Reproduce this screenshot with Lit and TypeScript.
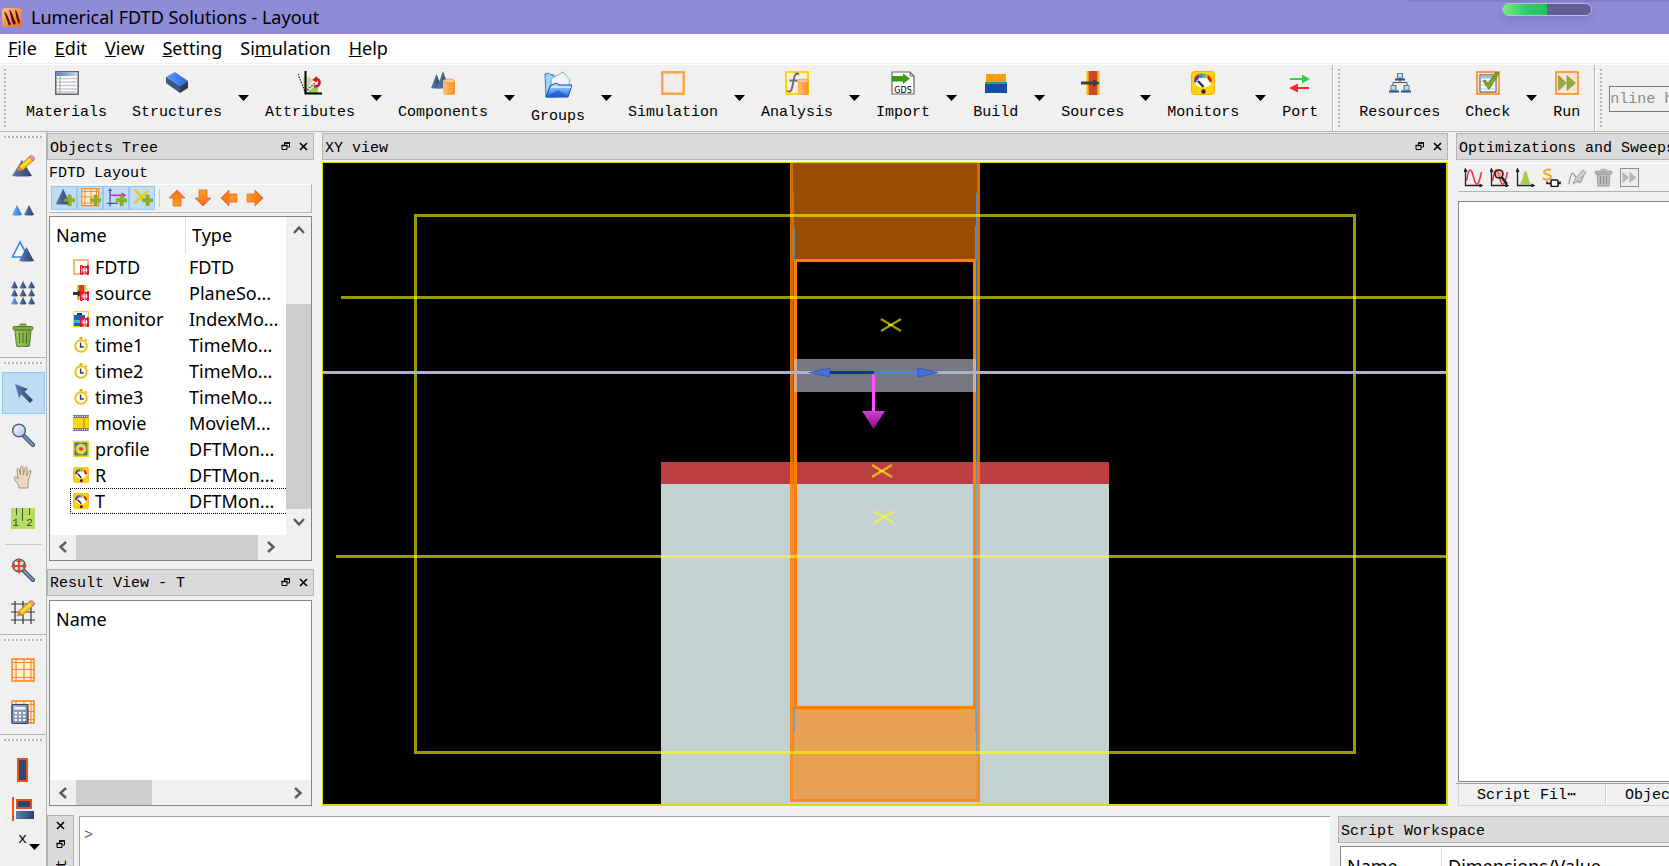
import { LitElement, html, svg, css, TemplateResult } from "lit";
import { customElement, state } from "lit/decorators.js";
import { classMap } from "lit/directives/class-map.js";

type Art = ReturnType<typeof svg>;

const cylinder = (x: number, y: number, w: number, h: number) => svg`
  <rect x=${x} y=${y} width=${w} height=${h} rx="2" fill="url(#cyl)"/>
  <ellipse cx=${x + w / 2} cy=${y + 1} rx=${w / 2} ry="2" fill="#ffc98a" stroke="#f08a24" stroke-width=".7"/>`;

const mesh = svg`
  <rect x="1" y="1" width="22" height="22" fill="#fdeee0" stroke="#ff8a1e" stroke-width="1.6"/>
  <path d="M5 1V23M13 1V23M20 1V23M1 4.500H23M1 11.500H23M1 19.500H23" stroke="#ff8a1e" stroke-width="1.200" fill="none"/>`;

const pencil = svg`
  <path d="M6 16L8 11 19 1 23 5 12 15Z" fill="#fdc100" stroke="#a86a00" stroke-width=".6"/>
  <path d="M18 2L20.500 0 24 3 22 6Z" fill="#ef8fa5" stroke="#b0506a" stroke-width=".5"/>
  <path d="M6 16L8 11 12 15Z" fill="#c98b4a"/><path d="M10 12.500L20 3.500" stroke="#ffe680" stroke-width="1.200"/>`;

const lens = svg`
  <path d="M13 13L22 22" stroke="#33466b" stroke-width="4" stroke-linecap="round"/>
  <path d="M13 13L22 22" stroke="#8797b8" stroke-width="2" stroke-linecap="round"/>
  <circle cx="8" cy="7.500" r="6.300" fill="url(#glass)" stroke="#4c6187" stroke-width="1.500"/>`;

const plus = svg`<path d="M17 9h4v5h5v4h-5v5h-4v-5h-5v-4h5z" fill="#8fae2c" stroke="#75921c" stroke-width=".6"/>`;

const gauge = svg`
  <rect x=".5" y=".5" width="23" height="23" rx="3" fill="#ffd200" stroke="#f3b300"/>
  <path d="M3 12C3 1 21 1 21 12L17 13H7Z" fill="#fff"/>
  <path d="M3 11C3 6 5 4 8 3L9 7 5 12Z" fill="#6b3fa0"/>
  <path d="M8 3L11 2.500V7H9Z" fill="#3c7de0"/><path d="M11 2.500H14L14 7H11Z" fill="#3ec46d"/>
  <path d="M14 2.500L17 4 16 7.500 14 7Z" fill="#ff9a1f"/><path d="M17 4C20 6 21 8 21 11L18 12 16 7.500Z" fill="#e02020"/>
  <path d="M4 13C8 18 16 18 20 13L16 7H8Z" fill="#fff"/>
  <path d="M7 10L12.500 16" stroke="#1f2c4a" stroke-width="2.200"/><circle cx="12.500" cy="20.500" r="2.200" fill="#2e1a4f"/>`;

const badge = svg`
  <path d="M9.500 6.500H7.500V15.500H9.500M14 6.500H15.500V15.500H14" fill="none" stroke="#e01530"/>
  <rect x="8.500" y="7" width="6.500" height="8" fill="#e01530"/>
  <path d="M10.200 9V13.500M11.800 8V15M13.500 9V13.500M9.200 11.200H14.500" stroke="#fff" stroke-width=".9"/>`;

const clock = svg`
  <rect x="6.500" y="0" width="3" height="2.500" fill="#e7b400"/><path d="M12 2L14 4" stroke="#e7b400" stroke-width="1.500"/>
  <circle cx="8" cy="9" r="5.800" fill="#fffdf2" stroke="#f4bf1c" stroke-width="2"/>
  <path d="M7.600 5.500V10H10.800" stroke="#2c3e60" stroke-width="1.400" fill="none"/>`;

const plot = svg`<path d="M1.500 2V17.500H18M0 4L1.500 1 3 4M15.500 16L18 17.500 15.500 19" fill="none" stroke="#222" stroke-width="1.300"/>`;

const bigArrow = (turn: number) => svg`
  <path d="M9 1L17 9H13V17H5V9H1Z" transform="rotate(${turn} 9 9)" fill="url(#flame)" stroke="#f0602c" stroke-width=".8"/>`;

const play = (fill: string, edge: string) => svg`
  <path d="M3.500 4.500L11.500 12 3.500 19.500ZM12 4.500L20.500 12 12 19.500Z" fill=${fill} stroke=${edge} stroke-width=".6"/>`;

const tri = (x: number, y: number, w: number, h: number, fill = "url(#navy)") => svg`
  <path d="M${x + w / 2} ${y}L${x + w} ${y + h}Q${x + w / 2} ${y + h + 1} ${x} ${y + h}Z" fill=${fill}/>`;

const ART: Record<string, Art> = {
  materials: svg`<rect x=".8" y=".8" width="22.400" height="22.400" fill="#fff" stroke="#5a5560" stroke-width="1.400"/>
    <rect x="1.500" y="1.500" width="21" height="3.500" fill="url(#head)"/>
    <path d="M2 7.500H22M2 11H22M2 14.500H22M2 18H22M2 21H22" stroke="#c9c9d2" stroke-width="1.500"/><path d="M5 2V22" stroke="#8a8a94" stroke-width=".8"/>`,
  structures: svg`<path d="M1 6L10 1 23 10 15 15Z" fill="url(#blue)"/><path d="M1 6L15 15V22L1 12Z" fill="#3a5687"/><path d="M15 15L23 10V17L15 22Z" fill="#2b3c5e"/>`,
  attributes: svg`<path d="M5 8Q8 2 14 9L8 22H6Z" fill="#c6d9a0"/><path d="M7 22L20 14V22Z" fill="#8fd14f"/>
    <path d="M0 3L7 21L17 12" stroke="#111" stroke-width="1.200" stroke-dasharray="1.400 1.400" fill="none"/>
    <path d="M7.500 0V22.500H24" stroke="#000" stroke-width="2" fill="none"/>
    <path d="M16 15C21 17 24 10 19 8" stroke="#d01818" stroke-width="2.600" fill="none"/><path d="M14 9L19 5V11.500Z" fill="#d01818"/>`,
  components: svg`${tri(0, 3, 11, 14)}${tri(6, 0, 12, 17)}${cylinder(12, 9, 12, 15)}`,
  groups: svg`<path d="M1 3L10 4 11 26H2Z" fill="#9fd4f8" stroke="#2d7fd8"/><path d="M1 3L4 2 9 5" fill="#cfeafe" stroke="#2d7fd8"/>
    <path d="M7 8L19 1 26 9 24 18H8Z" fill="#f2f4fb" stroke="#9aa4c4"/><path d="M6 15L12 12 15 14H28L24 26H2Z" fill="url(#folder)" stroke="#1746ad"/>
    <path d="M3 25L14 19 24 25Z" fill="#1c53cf" opacity=".7"/><path d="M7 16H27" stroke="#dff2ff" stroke-width="1.400"/>`,
  simulation: svg`<rect x="1" y="1" width="22" height="22" fill="#f1eeea" stroke="#ff8a1e" stroke-width="1.500"/><rect x="2.500" y="2.500" width="19" height="19" fill="none" stroke="#ffc893" stroke-width="1"/>`,
  analysis: svg`<rect x="1" y="1" width="22" height="22" fill="#f4f1e4" stroke="#ffd400" stroke-width="2"/>
    <path d="M14 3.500C11 1 9.500 4 9 8L7 17C6.500 20 4.500 21.500 2 20M4.500 9.500H12.500" fill="none" stroke="#6c6c6c" stroke-width="1.900"/>${cylinder(12.500, 9, 11, 15)}`,
  import: svg`<path d="M1 1H19L23 5V23H1Z" fill="#fff" stroke="#666" stroke-width="1.200"/><path d="M19 1V5H23" fill="none" stroke="#666"/>
    <path d="M1 5H12V2.500L19 7.500 12 13V10.500H1Z" fill="#3f9912"/><text x="12" y="21.500" text-anchor="middle" class="gds">GDS</text>`,
  build: svg`<rect x="2" y="3" width="20" height="8.500" fill="#ff9c0a"/><rect x="1" y="11" width="22" height="11" fill="#154fa5"/><rect x="1" y="11" width="22" height="2" fill="#1ba784"/>`,
  sources: svg`<rect x="5" y="0" width="14" height="24" fill="#ffd84a"/><rect x="6.500" y="0" width="11" height="24" fill="#f0922c"/><rect x="8" y="0" width="8" height="24" fill="#cf4a1c"/>
    <path d="M0 10.500H12V8L19 12 12 16V13.500H0Z" fill="#3a3f4a"/>`,
  monitors: gauge,
  port: svg`<path d="M2 7H14V3.500L22 8 14 12.500V9H2Z" fill="#3ccb4a"/><path d="M21 16H10V12.500L1 17 10 21.500V18H21Z" fill="#fb2b2b"/>`,
  resources: svg`<path d="M12 6V12M5 16V11.500H19V16" stroke="#556" fill="none"/>
    <g fill="#bfe0f8" stroke="#5c7690"><rect x="9.500" y="2.500" width="5" height="4.500"/><rect x="3" y="14.500" width="5" height="4.500"/><rect x="16" y="14.500" width="5" height="4.500"/></g>
    <path d="M7 8.500H17M1 20.500H11M13 20.500H23" stroke="#2b4f8c" stroke-width="2"/>`,
  check: svg`<rect x="1" y="1" width="22" height="22" fill="#ffe6cf" stroke="#ff8a1e" stroke-width="1.600"/><rect x="4" y="4" width="16" height="17" fill="#fff" stroke="#444"/>
    <rect x="4.500" y="4.500" width="15" height="3" fill="#9fbdec"/><path d="M5 10H20M5 14H20M5 18H20" stroke="#b9bdd0"/><path d="M7 10L9 9 12 12.500 20 1 23 2 13 18.500Z" fill="#83a02e" stroke="#6f8a20"/>`,
  run: svg`<rect x="1" y="1" width="22" height="22" fill="#fbe4cd" stroke="#ff8a1e" stroke-width="1.600"/>${play("#93a943", "#7f9633")}`,
  edit: svg`${tri(1, 5, 20, 16)}${pencil}`,
  mirror: svg`${tri(1, 8, 10, 10, "url(#sky)")}${tri(13, 8, 10, 10)}`,
  outline: svg`<path d="M9 3L17 18H1.500Z" fill="#f6fbff" stroke="#3d86e0" stroke-width="1.600"/>${tri(8, 8, 15, 14)}`,
  array: svg`${[0, 8, 16].map(y => [0, 8.5, 17].map(x => tri(x, y, 7, 7, y === 16 && x === 0 ? "url(#sky)" : "url(#navy)")))}`,
  trash: svg`<path d="M4 7H20L18.500 23Q12 25 5.500 23Z" fill="url(#leaf)" stroke="#4f7f1c"/><rect x="2" y="3.500" width="20" height="3.500" rx="1.500" fill="#7fa945" stroke="#4f7f1c"/>
    <rect x="9" y="1" width="6" height="2.500" rx="1" fill="#9cc067" stroke="#4f7f1c"/><path d="M8.500 9.500V20M12 9.500V20M15.500 9.500V20" stroke="#4d7a1e" stroke-width="1.200"/>`,
  pointer: svg`<path d="M4 3L17 8 13.500 10.500 22 19 19 22 10.500 13.500 8 17Z" fill="url(#navy)"/>`,
  zoom: lens,
  hand: svg`<path d="M8 23C8 18 2.500 16 3.500 12.500 4 11 6 12 7 14L6 5C6 3 8 3 8.300 5L9.500 10 9.500 2.500C9.500 1 12 1 12 2.500L12.500 10 14 3C14.500 1.500 16.500 2 16.200 3.500L15.500 11 18 6C19 4.500 20.500 5.500 20 7L17.500 15C17 18 17 20 17 23Z" fill="#ead9c2" stroke="#a08b70" stroke-width=".9"/>`,
  ruler: svg`<rect x="0" y="1" width="24" height="21" fill="#b9dc5e"/><path d="M5.500 1V8M11.500 1V14M18.500 1V8" stroke="#3c5a3c"/>
    <text x="4.500" y="19" text-anchor="middle" class="num">1</text><text x="18.500" y="19" text-anchor="middle" class="num">2</text>`,
  extent: svg`${lens}<path d="M8 0L11 4H9V7H12V5L16 8 12 11V9H9V12H11L8 16 5 12H7V9H4V11L0 8 4 5V7H7V4H5Z" fill="#e2481c"/>`,
  grid: svg`<path d="M4 1V24M12 1V24M20 1V24M0 4H24M0 12H24M0 20H24" stroke="#3a3230" stroke-width="1.200"/>${pencil}`,
  mesh,
  calc: svg`${mesh}<rect x="1" y="4.500" width="16" height="19" rx="1.500" fill="url(#steel)" stroke="#2b4064" stroke-width="1.200"/>
    <rect x="3.500" y="7" width="11" height="2.500" fill="#f3f5fa"/><path d="M3.500 13H14.500M3.500 16.500H14.500M3.500 20H14.500" stroke="#fff" stroke-width="2" stroke-dasharray="2.400 1.900"/>`,
  bar: svg`<rect x="7" y="1" width="9" height="22" fill="#2d4878" stroke="#ea5018" stroke-width="2"/>`,
  align: svg`<rect x="1" y="0" width="2" height="24" fill="#ea5018"/><rect x="6" y="3" width="14" height="8" fill="#2d4878" stroke="#ea5018" stroke-width="2"/><rect x="5" y="14" width="18" height="8" fill="url(#navy)"/>`,
  spread: svg`<rect x="3" y="3" width="8" height="10" fill="#2d4878" stroke="#ea5018" stroke-width="2"/><rect x="14" y="0" width="8" height="14" fill="url(#navy)"/>`,
  addStructure: svg`${tri(1, 1, 19, 20)}${plus}`,
  addMesh: svg`${mesh}${plus}`,
  addSource: svg`<path d="M4 1V24M0 20H14" stroke="#3a5a90" stroke-width="1.600"/><path d="M1.500 4L4 0 6.500 4Z" fill="#3a5a90"/><path d="M4 9.500H21" stroke="#c430d8" stroke-width="2.200"/><path d="M19 5.500L25 9.500 19 13.500Z" fill="#c430d8"/>${plus}`,
  addMonitor: svg`<path d="M2 2L20 21M20 3L2 20" stroke="#e8cf00" stroke-width="3"/>${plus}`,
  up: bigArrow(0), down: bigArrow(180), left: bigArrow(270), right: bigArrow(90),
  tFdtd: svg`<rect x="1" y="1" width="14" height="14" fill="#fff" stroke="#ff9d4a" stroke-width="1.500"/>${badge}`,
  tSource: svg`<rect x="4" y="0" width="9" height="15" fill="#ffb21c"/><rect x="6" y="0" width="5" height="8" fill="#d1421c"/><path d="M0 7H5V5L9 8.500 5 12V10H0Z" fill="#333"/>${badge}`,
  tIndex: svg`<rect x=".5" y=".5" width="15" height="15" fill="#fff" stroke="#ffd400"/><rect x="1" y="4" width="11" height="11" fill="#1d64b0"/><rect x="4" y="2" width="5" height="2" fill="#173a70"/><rect x="1" y="9" width="9" height="3" fill="#2ec0d0"/>${badge}`,
  tTime: clock,
  tMovie: svg`<rect x="0" y="0" width="16" height="16" fill="#6d6870"/><rect x="0" y="3" width="16" height="10" fill="#ffd800"/><path d="M11 3V13" stroke="#b08900"/><path d="M0 1.500H16M0 14.500H16" stroke="#fff" stroke-width="1.400" stroke-dasharray="1 1.200"/>`,
  tProfile: svg`<rect x=".8" y=".8" width="14.400" height="14.400" fill="#49709e" stroke="#ffd000" stroke-width="1.600"/><circle cx="8" cy="8" r="5.500" fill="#b9dc6a"/><circle cx="8" cy="8" r="3.500" fill="#ffd23c"/><circle cx="8" cy="8" r="2" fill="#f23c1c"/>`,
  sweep: svg`${plot}<path d="M2.500 13C5 -1 7 -1 9.500 9S14 20 17.500 4" fill="none" stroke="#f03030" stroke-width="1.500"/>`,
  optimize: svg`${plot}<path d="M2.500 13C5 -1 7 -1 9.500 9S14 20 17.500 4" fill="none" stroke="#f03030" stroke-width="1.500"/><circle cx="9" cy="6" r="4" fill="#ff8a80" fill-opacity=".6" stroke="#222" stroke-width="1.600"/><path d="M11.500 9L17 16" stroke="#222" stroke-width="2.600"/>`,
  yield: svg`${plot}<path d="M3 16.500C7 15 7 3 9.500 3S12 15 15.500 16.500Z" fill="#a8cc4c"/>`,
  sparam: svg`<path d="M9 2.500C6 .5 1.500 2 2 4.500 2.500 7 9 6 9 9S3 12.500 .8 10" fill="none" stroke="#ffa51c" stroke-width="1.900"/><path d="M5 13.500V15.500H18V13.500" fill="none" stroke="#111" stroke-width="1.500"/><rect x="9" y="12" width="7" height="6.500" rx="1" fill="#fff" stroke="#111" stroke-width="1.500"/>`,
  tune: svg`<path d="M1 16C3 3 5 3 8 10S13 16 16 5" fill="none" stroke="#a3a3a3" stroke-width="1.500"/><path d="M5 16L7 11 15 2 18 5 10 13Z" fill="#cfcfcf" stroke="#9c9c9c"/>`,
  bin: svg`<path d="M3 6H16L15 18H4Z" fill="#bcbcbc" stroke="#9a9a9a"/><rect x="1" y="3" width="17" height="3" rx="1" fill="#b2b2b2" stroke="#9a9a9a" stroke-width=".6"/><rect x="6.500" y=".8" width="6" height="2" fill="#b2b2b2"/><path d="M6.500 8V16M9.500 8V16M12.500 8V16" stroke="#8d8d8d"/>`,
  runGrey: svg`<rect x=".5" y=".5" width="18" height="18" fill="#ececec" stroke="#8f8f8f"/><path d="M2.500 4L9 9.500 2.500 15ZM9.500 4L16.500 9.500 9.500 15Z" fill="#b4b4b4"/>`,
};

const SIDE: Record<string, Art> = {
  restore: svg`<path d="M3.500 3V1H8.500V5H6.500M1 3.500H6V7.500H1Z" fill="none" stroke="#000" stroke-width="1"/><path d="M3 1H9M.5 3.500H6.500" stroke="#000" stroke-width="1.600"/>`,
  close: svg`<path d="M1 1L8 8M8 1L1 8" stroke="#000" stroke-width="1.600"/>`,
};

const icon = (name: string, size = 24, box = size) =>
  html`<svg width=${size} height=${size} viewBox="0 0 ${box} ${box}" aria-hidden="true">${ART[name]}</svg>`;

const caret = html`<svg width="11" height="6" viewBox="0 0 11 6" aria-hidden="true"><path d="M0 0H11L5.500 6Z" fill="#000"/></svg>`;

const chevron = (turn: number) => html`<svg width="12" height="12" viewBox="0 0 12 12" aria-hidden="true">
  <path d="M1 9L6 3.500 11 9" transform="rotate(${turn} 6 6)" fill="none" stroke="#5c5c5c" stroke-width="2.400"/></svg>`;

interface Tool { label: string; icon: string; menu?: boolean; size?: number; }

const MAIN: Tool[] = [
  { label: "Materials", icon: "materials" },
  { label: "Structures", icon: "structures", menu: true },
  { label: "Attributes", icon: "attributes", menu: true },
  { label: "Components", icon: "components", menu: true },
  { label: "Groups", icon: "groups", menu: true, size: 28 },
  { label: "Simulation", icon: "simulation", menu: true },
  { label: "Analysis", icon: "analysis", menu: true },
  { label: "Import", icon: "import", menu: true },
  { label: "Build", icon: "build", menu: true },
  { label: "Sources", icon: "sources", menu: true },
  { label: "Monitors", icon: "monitors", menu: true },
  { label: "Port", icon: "port" },
];
const CONTROL: Tool[] = [
  { label: "Resources", icon: "resources" },
  { label: "Check", icon: "check", menu: true },
  { label: "Run", icon: "run" },
];
const ROWS: [string, string, string, number][] = [
  ["FDTD", "FDTD", "tFdtd", 16],
  ["source", "PlaneSo...", "tSource", 16],
  ["monitor", "IndexMo...", "tIndex", 16],
  ["time1", "TimeMo...", "tTime", 16],
  ["time2", "TimeMo...", "tTime", 16],
  ["time3", "TimeMo...", "tTime", 16],
  ["movie", "MovieM...", "tMovie", 16],
  ["profile", "DFTMon...", "tProfile", 16],
  ["R", "DFTMon...", "monitors", 24],
  ["T", "DFTMon...", "monitors", 24],
];
const MENUS: [string, string, string][] = [
  ["", "F", "ile"], ["", "E", "dit"], ["", "V", "iew"], ["", "S", "etting"], ["Si", "m", "ulation"], ["", "H", "elp"],
];

@customElement("app-root")
export class AppRoot extends LitElement {
  @state() private selected = "T";
  @state() private mode = "pointer";

  static styles = css`
    :host {
      display: flex; flex-direction: column; height: 100vh; overflow: hidden;
      background: #f0f0f0; color: #000; font: 18px/26px "Noto Sans", "Open Sans", sans-serif;
      --mono: "Liberation Mono", "DejaVu Sans Mono", monospace;
    }
    * { box-sizing: border-box; }
    button { font: inherit; color: inherit; background: none; border: 0; padding: 0; margin: 0; }
    svg { display: block; flex: none; }
    .defs { position: absolute; width: 0; height: 0; }
    .gds { font: 8px "DejaVu Sans", sans-serif; }
    .num { font: 11px "Liberation Mono", monospace; fill: #2c4a2c; }

    .title { flex: none; height: 34px; padding: 0 77px 0 2px; display: flex; align-items: center; gap: 8px;
      background: linear-gradient(#7f7bc2, #8f8bd7) right top / 261px 3px no-repeat #8f8bd7; }
    .title h1 { margin: 0; flex: 1; font-size: 18px; font-weight: 400; line-height: 34px; white-space: nowrap; }
    .charge { align-self: flex-start; margin-top: 3px; width: 90px; height: 13px; border: 1px solid #bdbae6; border-radius: 6px;
      background: #625f98; overflow: hidden; box-shadow: 0 4px 8px rgba(60, 56, 130, .2); }
    .charge i { display: block; height: 100%; width: 50%; background: linear-gradient(90deg, #78f080, #2ecc71 50%, #25c060); }

    .menus { flex: none; height: 30px; display: flex; gap: 2px; background: #fff; border-bottom: 1px solid #f0f0f0; }
    .menus button { padding: 0 8px; line-height: 29px; }

    .bars { flex: none; display: flex; height: 68px; border-top: 1px solid #fff; border-bottom: 1px solid #b4b4b4; overflow: hidden; }
    .bar { display: flex; flex: none; padding-right: 1px; border-right: 1px solid #b4b4b4; }
    .bar + .bar { border-left: 1px solid #fff; }
    .bar.help { flex: 1; min-width: 0; border-right: 0; padding: 0; align-items: center; }
    .grip { flex: none; width: 2px; margin: 4px 8px 4px 4px; align-self: stretch;
      background: repeating-linear-gradient(180deg, #b4b4b4 0 2px, #fafafa 2px 4px); }
    .bar + .bar .grip { margin-right: 7px; }
    .tool { display: flex; flex-direction: column; align-items: center; gap: 9px; padding: 6px 12px 0; font: 15px/18px var(--mono); }
    .solo { margin-right: 1px; }
    .drop { width: 19px; display: flex; align-items: center; justify-content: center; }
    .find { flex: 1; min-width: 0; height: 26px; margin-top: 2px; border: 1px solid #7a7a7a; border-right: 0; background: #f0f0f0;
      padding: 0; font: 15px/18px var(--mono); }
    .find::placeholder { color: #8a8a8a; opacity: 1; }

    .main { flex: 1; min-height: 0; display: flex; }
    .side { flex: none; width: 47px; border-right: 1px solid #b4b4b4; overflow: hidden; }
    .pack { display: flex; flex-direction: column; padding-bottom: 1px; border-bottom: 1px solid #b4b4b4; }
    .pack:last-child { border: 0; }
    .pack .dots { height: 2px; margin: 4px 3px 8px 4px; background: repeating-linear-gradient(90deg, #b4b4b4 0 2px, #fafafa 2px 4px); }
    .pack button { flex: none; height: 42px; margin: 0 1px 0 2px; padding-right: 1px; display: flex; align-items: center; justify-content: center; border: 1px solid transparent; }
    .pack button.on { background: #c0dcf3; border-color: #90c8f6; }
    .pack .short { height: 36px; }
    .pack .axis { height: 34px; gap: 2px; align-items: flex-start; font: 15px/24px var(--mono); }
    .pack .axis { justify-content: flex-end; padding-right: 4px; }
    .axis svg { margin-top: 16px; }
    .pack hr { width: 37px; height: 1px; margin: 4px 5px; border: 0; background: #c8c8c8; }

    .work { flex: 1; min-width: 0; padding-top: 1px; display: grid; grid-template-rows: minmax(0, 1fr) 51px; gap: 9px; }
    .upper { display: grid; grid-template-columns: 267px minmax(0, 1fr) 213px; gap: 8px; min-height: 0; }
    .stack { display: grid; grid-template-rows: minmax(0, 9fr) minmax(0, 5fr); gap: 8px; min-height: 0; }
    .dock { display: flex; flex-direction: column; min-width: 0; min-height: 0; overflow: hidden; }
    .cap { flex: none; display: flex; align-items: center; gap: 9px; height: 27px; padding: 0 5px 0 2px; background: #dadada; border: 1px solid #b4b4b4; }
    .open { padding-right: 0; border-right: 0; }
    h2 { flex: 1; min-width: 0; margin: 0; font: 15px/20px var(--mono); white-space: nowrap; }
    .cap h2 { padding-top: 4px; }
    .sub { margin: 0; padding: 4px 2px 0; font: 15px/20px var(--mono); }
    .strip { flex: none; display: flex; height: 29px; margin: 0 2px; padding: 2px 0 2px 2px; border: solid #b4b4b4; border-width: 0 1px 1px 0; box-shadow: inset 0 1px #fff; }
    .strip button { width: 26px; display: flex; align-items: center; justify-content: center; }
    .strip button.on { background: #c0dcf3; border: 1px solid #90c8f6; padding-left: 1px; }
    .strip i { width: 1px; margin: 3px 4px; background: #c8c8c8; }
    .frame { flex: 1; min-height: 0; margin: 4px 2px 0; border: 1px solid #828790; background: #fff; overflow: hidden; }
    .strip + .frame { margin-top: 3px; }
    .scroll { display: grid; grid-template-columns: minmax(0, 1fr) 25px; grid-template-rows: minmax(0, 1fr) 25px; }
    .wide { grid-template-columns: minmax(0, 1fr); }
    .pane { overflow: hidden; }
    .v, .h { display: flex; background: #f0f0f0; }
    .v { flex-direction: column; }
    .h { grid-column: 1 / -1; }
    .v button, .h button { flex: none; width: 26px; height: 25px; display: flex; align-items: center; justify-content: center; }
    .v button { width: 25px; height: 26px; }
    .thumb { background: #cdcdcd; }
    .g3 { flex: 3; } .g4 { flex: 4; } .g7 { flex: 7; } .g10 { flex: 10; }
    .end { width: 27px; }

    table { width: 100%; border-collapse: separate; border-spacing: 0; table-layout: fixed; }
    th { height: 37px; padding: 0 6px 2px; text-align: left; font-weight: 400; }
    th + th { border-left: 1px solid #e0e0e0; }
    td { height: 26px; padding: 0 0 0 4px; white-space: nowrap; overflow: hidden; line-height: 24px; }
    td:first-child { padding: 0 0 0 20px; }
    .c1 { width: 135px; }
    .cell { display: flex; align-items: center; gap: 6px; height: 26px; padding-left: 2px; border: 1px solid transparent; border-right: 0; }
    .sel .cell { border: 1px dotted #000; border-right: 0; }
    .sel td + td { border: 1px dotted #000; border-width: 1px 0; }
    .name { padding: 5px 6px; }

    .view { flex: 1; min-height: 0; margin-top: 2px; background: #000; border: solid #d9d900; border-width: 1px 2px 2px 1px; }
    .view svg { width: 100%; height: 100%; }
    .sweeps { margin: 3px 0 0 2px; border-right: 0; align-items: center; }
    .strip + .blank { margin: 9px 0 0 2px; border-right: 0; }
    .tabs { flex: none; display: flex; height: 23px; margin-top: 1px; border-top: 1px solid #a0a0a0; padding-left: 2px; }
    .tabs button { flex: none; min-width: 148px; text-align: left; padding: 3px 18px 0; border: solid #d0d0d0; border-width: 0 1px 1px; font: 15px/18px var(--mono); white-space: nowrap; }
    .tabs button + button { border-left: 1px solid #fff; }

    .lower { display: grid; grid-template-columns: minmax(0, 1fr) 331px; gap: 8px; min-height: 0; overflow: hidden; }
    .lower .dock { padding-top: 1px; }
    .console { display: flex; gap: 5px; min-height: 0; }
    .vcap { flex: none; width: 27px; display: flex; flex-direction: column; align-items: center; gap: 10px; padding-top: 5px; background: #dadada; border: 1px solid #b4b4b4; border-bottom: 0; overflow: hidden; }
    .vcap h2 { flex: none; writing-mode: vertical-rl; transform: rotate(180deg); padding-right: 4px; }
    .prompt { flex: 1; min-width: 0; display: flex; margin-top: 1px; padding: 10px 4px; background: #fff; border: solid #a0a0a0; border-width: 1px 0 0 1px; font: 15px/18px var(--mono); color: #46608f; }
    .prompt textarea { flex: 1; border: 0; outline: 0; resize: none; padding: 0 4px; font: inherit; background: none; overflow: hidden; }
    .vars { margin: 3px 0 0 2px; border-width: 1px 0 0 1px; }
    .vars .c1 { width: 100px; }
    .vars th { white-space: nowrap; padding-bottom: 0; }
  `;

  private tool(t: Tool): TemplateResult {
    return html`<button class="tool ${t.menu ? "" : "solo"}">${icon(t.icon, t.size ?? 24)}<span>${t.label}</span></button>
      ${t.menu ? html`<button class="drop" aria-label="${t.label} menu">${caret}</button>` : ""}`;
  }

  private side(name: string, cls = ""): TemplateResult {
    return html`<button class="${cls} ${this.mode === name ? "on" : ""}" aria-label=${name} @click=${() => (this.mode = name)}>${icon(name)}</button>`;
  }

  private small(name: "restore" | "close"): TemplateResult {
    return html`<button aria-label=${name}><svg width="9" height="9" viewBox="0 0 9 9">${SIDE[name]}</svg></button>`;
  }

  private cap(text: string, controls = true): TemplateResult {
    return html`<header class="cap ${controls ? "" : "open"}"><h2>${text}</h2>${controls ? html`${this.small("restore")}${this.small("close")}` : ""}</header>`;
  }

  private scene(): TemplateResult {
    const cross = (x: number, y: number) => svg`<path d="M${x - 10} ${y - 6}L${x + 10} ${y + 6}M${x + 10} ${y - 6}L${x - 10} ${y + 6}"
      stroke="#ff0" stroke-opacity=".6" stroke-width="2.500"/><rect x=${x - 3} y=${y - 1} width="5" height="2" fill="#ff0" fill-opacity=".6"/>`;
    return html`<svg viewBox="323 163 1123 641" preserveAspectRatio="xMidYMid slice" role="img" aria-label="XY view of the simulation">
      <g shape-rendering="crispEdges" fill="none">
        <rect x="661" y="484" width="448" height="330" fill="#c4d1d1"/>
        <rect x="661" y="462" width="448" height="22" fill="#be3f41"/>
        <path d="M793 150H977V260H793ZM793 708H977V800H793Z" fill="#ff8000" fill-opacity=".6"/>
        <path d="M791.500 150V800.500H978.500V150" stroke="#ff8000" stroke-opacity=".84" stroke-width="3"/>
        <path d="M793.500 193V755M976.500 193V755M794.500 226V260M975.500 226V260M794.500 708V732M975.500 708V732" stroke="#4a9cf0" stroke-opacity=".7"/>
        <rect x="795.500" y="260.500" width="179" height="447" stroke="#ff8000" stroke-width="3"/>
        <rect x="794" y="359" width="182" height="33" fill="#c7c7d7" fill-opacity=".6"/>
        <g stroke="#ff0" stroke-opacity=".6" stroke-width="3">
          <rect x="415.500" y="215.500" width="939" height="537"/>
          <path d="M341 297.500H1500M336 556.500H1500"/>
        </g>
        <path d="M300 372.500H1500" stroke="#b0b0cc" stroke-width="3"/>
        <path d="M830 372.500H874" stroke="#0033b0" stroke-width="3"/>
        <path d="M874 372.500H918" stroke="#4a80ff" stroke-width="3"/>
        <path d="M873.500 374V411" stroke="#ff50ff" stroke-width="3"/>
      </g>
      <path d="M809 372.500L830 368V377ZM938 372.500L918 368V377Z" fill="#4273dc" stroke="#1e4cb0" stroke-width=".6"/>
      <path d="M862 411H885L873.500 429Z" fill="url(#plum)"/>
      ${cross(891, 325)}${cross(882, 471)}${cross(884, 517)}
    </svg>`;
  }

  render() {
    const grad = (id: string, stops: string[], x2 = 1, y2 = 0) => svg`<linearGradient id=${id} x1="0" y1="0" x2=${x2} y2=${y2}>
      ${stops.map((c, i) => svg`<stop offset=${i / (stops.length - 1)} stop-color=${c}/>`)}</linearGradient>`;
    return html`
      <svg class="defs" aria-hidden="true"><defs>
        ${grad("navy", ["#5f80b4", "#2b4068"])}${grad("sky", ["#6fb2f8", "#2d6fd0"])}${grad("blue", ["#5a9bff", "#2c63d8"])}
        ${grad("cyl", ["#ffc078", "#ff8f1c"])}${grad("head", ["#4f7dc4", "#c5d8f2"])}${grad("folder", ["#bfe6ff", "#2a6be8"], 0, 1)}
        ${grad("leaf", ["#a3c866", "#78a63a"])}${grad("glass", ["#ffffff", "#a9bfe0"], 1, 1)}${grad("steel", ["#a8b4cc", "#6b7ca0"], 1, 1)}
        ${grad("flame", ["#f46a1c", "#ffa21c"], 0, 1)}${grad("plum", ["#d040d0", "#860c8c"], 0, 1)}${grad("logo", ["#ffc08a", "#f0641c"], 1, 1)}
      </defs></svg>

      <header class="title">
        <svg width="21" height="21" viewBox="0 0 21 21" aria-hidden="true"><rect x="0" y="1" width="20" height="19" rx="4" fill="url(#logo)"/>
          <path d="M2 5C5 4 7 14 9 17L7 19C5 14 4 9 2 5ZM7 3C10 3 11 11 14 16L12 18C9 14 9 8 7 3ZM13 3C16 4 16 10 18 14L17 17C14 12 14 7 13 3Z" fill="#4a1606"/></svg>
        <h1>Lumerical FDTD Solutions - Layout</h1>
        <div class="charge"><i></i></div>
      </header>

      <nav class="menus">${MENUS.map(([a, u, b]) => html`<button>${a}<u>${u}</u>${b}</button>`)}</nav>

      <div class="bars">
        <div class="bar"><span class="grip"></span>${MAIN.map(t => this.tool(t))}</div>
        <div class="bar"><span class="grip"></span>${CONTROL.map(t => this.tool(t))}</div>
        <div class="bar help"><span class="grip"></span><input class="find" type="text" aria-label="Online help" placeholder="nline help"></div>
      </div>

      <div class="main">
        <div class="side">
          <div class="pack"><div class="dots"></div>${["edit", "mirror", "outline", "array", "trash"].map(n => this.side(n))}</div>
          <div class="pack"><div class="dots"></div>${["pointer", "zoom", "hand", "ruler"].map(n => this.side(n))}<hr>${["extent", "grid"].map(n => this.side(n))}</div>
          <div class="pack"><div class="dots"></div>${["mesh", "calc"].map(n => this.side(n))}</div>
          <div class="pack"><div class="dots"></div>${this.side("bar")}${this.side("align", "short")}
            <button class="axis"><span>x</span>${caret}</button>${this.side("spread", "short")}</div>
        </div>

        <div class="work">
          <div class="upper">
            <div class="stack">
              <section class="dock">
                ${this.cap("Objects Tree")}
                <p class="sub">FDTD Layout</p>
                <div class="strip">
                  ${["addStructure", "addMesh", "addSource", "addMonitor"].map(n => html`<button class="on" aria-label=${n}>${icon(n, 20, 26)}</button>`)}
                  <i></i>
                  ${["up", "down", "left", "right"].map(n => html`<button aria-label=${n}>${icon(n, 18)}</button>`)}
                </div>
                <div class="frame scroll">
                  <div class="pane"><table>
                    <colgroup><col class="c1"><col></colgroup>
                    <thead><tr><th>Name</th><th>Type</th></tr></thead>
                    <tbody>${ROWS.map(([n, t, i, b]) => html`<tr class=${classMap({ sel: n === this.selected })} @click=${() => (this.selected = n)}>
                      <td><div class="cell">${icon(i, 16, b)}<span>${n}</span></div></td><td>${t}</td></tr>`)}</tbody>
                  </table></div>
                  <div class="v"><button aria-label="scroll up">${chevron(0)}</button><div class="g3"></div><div class="thumb g10"></div><button aria-label="scroll down">${chevron(180)}</button></div>
                  <div class="h"><button aria-label="scroll left">${chevron(270)}</button><div class="thumb g10"></div><button aria-label="scroll right">${chevron(90)}</button><div class="end"></div></div>
                </div>
              </section>
              <section class="dock">
                ${this.cap("Result View - T")}
                <div class="frame scroll wide">
                  <div class="pane name">Name</div>
                  <div class="h"><button aria-label="scroll left">${chevron(270)}</button><div class="thumb g4"></div><div class="g7"></div><button aria-label="scroll right">${chevron(90)}</button></div>
                </div>
              </section>
            </div>

            <section class="dock">${this.cap("XY view")}<div class="view">${this.scene()}</div></section>

            <section class="dock">
              ${this.cap("Optimizations and Sweeps", false)}
              <div class="strip sweeps">${["sweep", "optimize", "yield", "sparam", "tune", "bin", "runGrey"].map(n => html`<button aria-label=${n}>${icon(n, 19)}</button>`)}</div>
              <div class="frame blank"></div>
              <div class="tabs"><button>Script Fil⋯</button><button>Objects Library</button></div>
            </section>
          </div>

          <div class="lower">
            <section class="console">
              <div class="vcap">${this.small("close")}${this.small("restore")}<h2>Script Prompt</h2></div>
              <div class="prompt"><label for="cmd">&gt;</label><textarea id="cmd" rows="1"></textarea></div>
            </section>
            <section class="dock">
              ${this.cap("Script Workspace", false)}
              <div class="frame vars"><table>
                <colgroup><col class="c1"><col></colgroup>
                <thead><tr><th>Name</th><th>Dimensions/Value</th></tr></thead>
              </table></div>
            </section>
          </div>
        </div>
      </div>`;
  }
}
